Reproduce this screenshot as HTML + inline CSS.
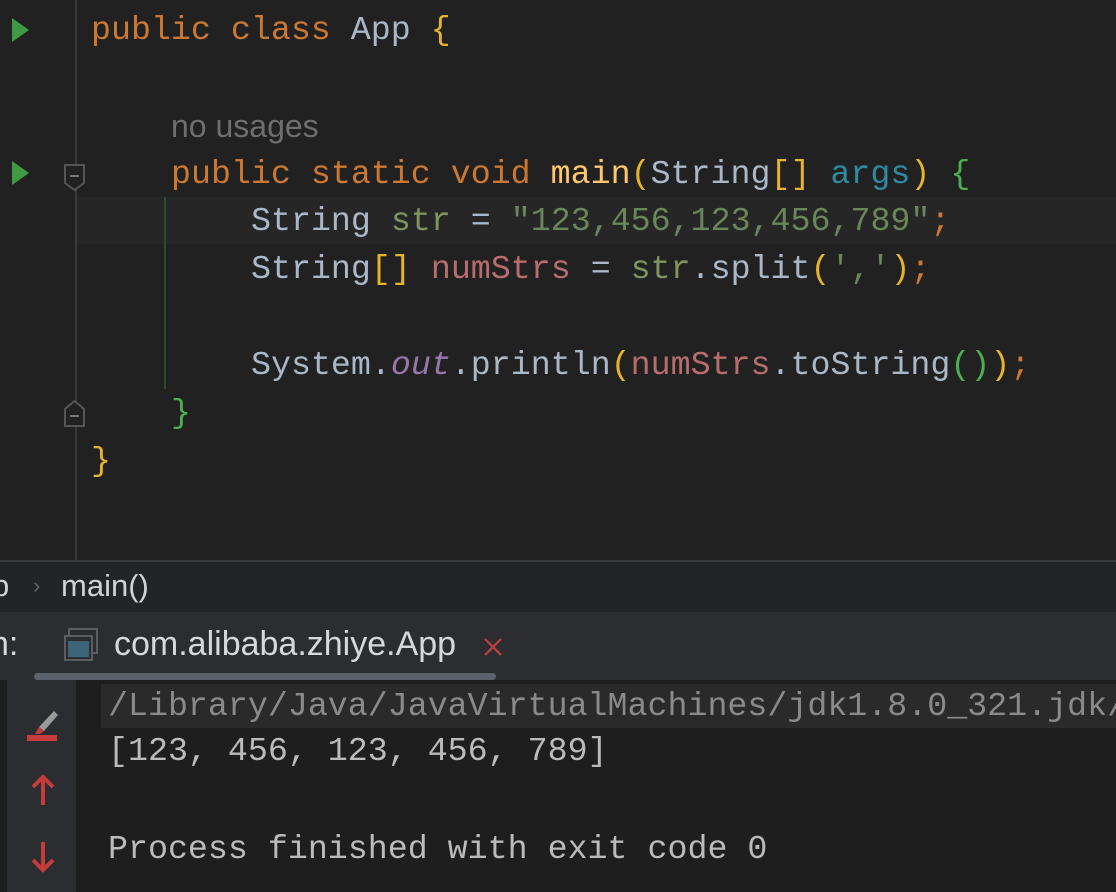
<!DOCTYPE html>
<html style="width:1116px;height:892px;overflow:hidden"><head><style>
*{margin:0;padding:0;box-sizing:border-box}
body{width:1116px;height:892px;overflow:hidden;background:#1e1f22;font-family:"Liberation Mono",monospace;position:relative}
.ed{position:absolute;left:0;top:0;width:1116px;height:560px;background:#212121}
.gut{position:absolute;left:75px;top:0;width:2px;height:560px;background:#3a3a3a}
.cur{position:absolute;left:77px;top:197px;width:1039px;height:47px;background:#262626}
.ln{position:absolute;height:48px;line-height:48px;font-size:33.3px;white-space:pre;color:#a9b7c6}
.k{color:#cc7832}.s{color:#6a8759}.y{color:#e5b42c}.g{color:#4caf50}.f{color:#ffc66d}.a{color:#2e8aa0}.v{color:#b76d6b}.o{color:#9876aa;font-style:italic}.sv{color:#7f9361}
.run{position:absolute;left:12px;width:0;height:0;border-top:12px solid transparent;border-bottom:12px solid transparent;border-left:17px solid #3e9a43}
.bc{position:absolute;left:0;top:560px;width:1116px;height:52px;background:#232425;border-top:2px solid #3a3a3a;font-family:"Liberation Sans",sans-serif;font-size:31px;color:#cfd2d6}
.tb{position:absolute;left:0;top:612px;width:1116px;height:68px;background:#2b2d30;font-family:"Liberation Sans",sans-serif;font-size:34px;color:#d5d8dc}
.con{position:absolute;left:0;top:680px;width:1116px;height:212px;background:#1e1e1e}
.side{position:absolute;left:7px;top:680px;width:69px;height:212px;background:#2b2d30}
.cl{position:absolute;left:108px;font-size:33.3px;white-space:pre;color:#bbbbbb;height:46px;line-height:46px}
</style></head><body>
<div class="ed"></div>
<div class="gut"></div>
<div class="cur"></div>
<div style="position:absolute;left:164px;top:197px;width:2px;height:192px;background:#2f4a2f"></div>
<div class="run" style="top:18px"></div>
<div class="run" style="top:161px"></div>
<svg style="position:absolute;left:64px;top:164px" width="22" height="28"><path d="M1 1H20V19L10.5 26L1 19Z" fill="#212121" stroke="#555" stroke-width="2"/><path d="M6 12H15" stroke="#777" stroke-width="2"/></svg>
<svg style="position:absolute;left:64px;top:400px" width="22" height="28"><path d="M1 9L10.5 1L20 9V26H1Z" fill="#212121" stroke="#555" stroke-width="2"/><path d="M6 16H15" stroke="#777" stroke-width="2"/></svg>

<div class="ln" style="left:91px;top:6px"><span class="k">public class </span>App <span class="y">{</span></div>
<div class="ln" style="left:171px;top:102px;font-family:'Liberation Sans',sans-serif;font-size:32px;color:#6e6e6e">no usages</div>
<div class="ln" style="left:171px;top:150px"><span class="k">public static void </span><span class="f">main</span><span class="y">(</span>String<span class="y">[]</span> <span class="a">args</span><span class="y">)</span> <span class="g">{</span></div>
<div class="ln" style="left:251px;top:197px">String <span class="sv">str</span> = <span class="s">"123,456,123,456,789"</span><span class="k">;</span></div>
<div class="ln" style="left:251px;top:245px">String<span class="y">[]</span> <span class="v">numStrs</span> = <span class="sv">str</span>.split<span class="y">(</span><span class="s">','</span><span class="y">)</span><span class="k">;</span></div>
<div class="ln" style="left:251px;top:341px">System.<span class="o">out</span>.println<span class="y">(</span><span class="v">numStrs</span>.toString<span class="g">()</span><span class="y">)</span><span class="k">;</span></div>
<div class="ln" style="left:171px;top:389px"><span class="g">}</span></div>
<div class="ln" style="left:91px;top:437px"><span class="y">}</span></div>

<div class="bc"><span style="position:absolute;left:-8px;top:6px">p</span><span style="position:absolute;left:33px;top:9px;color:#666;font-size:22px;line-height:30px">›</span><span style="position:absolute;left:61px;top:6px">main()</span></div>
<div class="tb">
<span style="position:absolute;left:-10px;top:13px">n:</span>
<svg style="position:absolute;left:64px;top:16px" width="34" height="34"><rect x="5" y="1" width="28" height="24" fill="none" stroke="#5a5e63" stroke-width="2"/><rect x="1" y="8" width="27" height="24" fill="#2b2d30" stroke="#5a5e63" stroke-width="2"/><rect x="4" y="13" width="21" height="16" fill="#3d6577"/></svg>
<span style="position:absolute;left:114px;top:13px">com.alibaba.zhiye.App</span>
<svg style="position:absolute;left:483px;top:25px" width="20" height="20"><path d="M2 2L18 18M18 2L2 18" stroke="#c04040" stroke-width="2.2"/></svg>
<div style="position:absolute;left:34px;top:61px;width:462px;height:7px;border-radius:4px;background:#5c626b"></div>
</div>
<div class="con"></div>
<div class="side"></div>
<div style="position:absolute;left:101px;top:684px;width:1015px;height:44px;background:#2a2a2a"></div>
<svg style="position:absolute;left:26px;top:705px" width="34" height="36"><path d="M18 26L32 10L28 6L13 22Z" fill="#9a9a9a"/><path d="M13 22L18 26L14 29H9Z" fill="#c63b3b"/><rect x="1" y="30" width="30" height="6" fill="#c63b3b"/></svg>
<svg style="position:absolute;left:28px;top:773px" width="30" height="34"><path d="M15 32V4M5 14L15 4L25 14" fill="none" stroke="#c63b3b" stroke-width="4"/></svg>
<svg style="position:absolute;left:28px;top:840px" width="30" height="34"><path d="M15 2V30M5 20L15 30L25 20" fill="none" stroke="#c63b3b" stroke-width="4"/></svg>
<div class="cl" style="top:683px;color:#8a8a8a">/Library/Java/JavaVirtualMachines/jdk1.8.0_321.jdk/</div>
<div class="cl" style="top:728px">[123, 456, 123, 456, 789]</div>
<div class="cl" style="top:826px">Process finished with exit code 0</div>
</body></html>
